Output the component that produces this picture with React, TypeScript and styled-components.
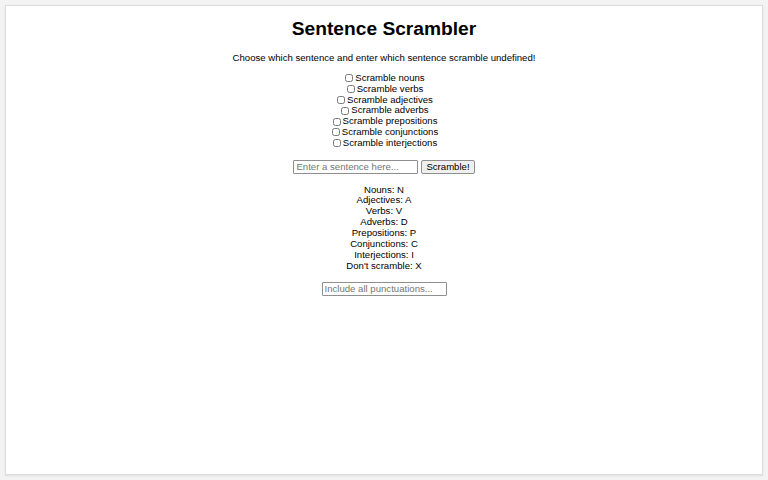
import React, { useState } from 'react';
import styled, { createGlobalStyle } from 'styled-components';

const GlobalStyle = createGlobalStyle`
  html, body {
    margin: 0;
    padding: 0;
    background: #f3f3f3;
  }
  body {
    font-family: "Liberation Sans", Arial, sans-serif;
  }
`;

const Page = styled.div`
  padding: 5px;
  height: 480px;
  box-sizing: border-box;
`;

const Card = styled.div`
  height: 100%;
  box-sizing: border-box;
  background: #fff;
  border: 1px solid #dcdcdc;
  box-shadow: 0 1px 2px rgba(0, 0, 0, 0.08);
  display: flex;
  flex-direction: column;
  align-items: center;
  color: #000;
  font-size: 9.6px;
`;

const Title = styled.h1`
  font-size: 19.2px;
  font-weight: bold;
  margin: 12px 0 0;
  line-height: 22px;
`;

const Intro = styled.p`
  margin: 12px 0 0;
  line-height: 11px;
`;

const CheckList = styled.div`
  margin-top: 10px;
  display: flex;
  flex-direction: column;
  align-items: center;
`;

const Option = styled.label`
  display: flex;
  align-items: center;
  height: 10.8px;
  line-height: 10.8px;
`;

const Box = styled.input`
  width: 8px;
  height: 8px;
  margin: 0 2px 0 2px;
`;

const Row = styled.div`
  margin-top: 11px;
  display: flex;
  align-items: center;
  gap: 3px;
`;

const TextField = styled.input`
  width: 125px;
  height: 14px;
  box-sizing: border-box;
  padding: 0 2px;
  font-family: inherit;
  font-size: 9.6px;
  border: 1px solid #8f8f8f;
  border-radius: 1px;
  &::placeholder {
    color: #767676;
  }
`;

const Button = styled.button`
  height: 14px;
  box-sizing: border-box;
  padding: 0 4px;
  font-family: inherit;
  font-size: 9.6px;
  color: #000;
  background: #efefef;
  border: 1px solid #8f8f8f;
  border-radius: 2px;
`;

const Legend = styled.div`
  margin-top: 11px;
  display: flex;
  flex-direction: column;
  align-items: center;
  line-height: 10.9px;
`;

const PunctField = styled(TextField)`
  margin-top: 10px;
`;

const kinds = [
  'nouns',
  'verbs',
  'adjectives',
  'adverbs',
  'prepositions',
  'conjunctions',
  'interjections',
];

const codes: [string, string][] = [
  ['Nouns', 'N'],
  ['Adjectives', 'A'],
  ['Verbs', 'V'],
  ['Adverbs', 'D'],
  ['Prepositions', 'P'],
  ['Conjunctions', 'C'],
  ['Interjections', 'I'],
  ["Don't scramble", 'X'],
];

function App() {
  const [checked, setChecked] = useState<Record<string, boolean>>({});
  const [sentence, setSentence] = useState('');

  function toggle(kind: string) {
    setChecked({ ...checked, [kind]: !checked[kind] });
  }

  return (
    <Page>
      <GlobalStyle />
      <Card>
        <Title>Sentence Scrambler</Title>
        <Intro>Choose which sentence and enter which sentence scramble undefined!</Intro>
        <CheckList>
          {kinds.map((k) => (
            <Option key={k}>
              <Box type="checkbox" checked={!!checked[k]} onChange={() => toggle(k)} />
              Scramble {k}
            </Option>
          ))}
        </CheckList>
        <Row>
          <TextField
            placeholder="Enter a sentence here..."
            value={sentence}
            onChange={(e) => setSentence(e.target.value)}
          />
          <Button>Scramble!</Button>
        </Row>
        <Legend>
          {codes.map(([name, code]) => (
            <div key={code}>
              {name}: {code}
            </div>
          ))}
        </Legend>
        <PunctField placeholder="Include all punctuations..." />
      </Card>
    </Page>
  );
}

export default App;
